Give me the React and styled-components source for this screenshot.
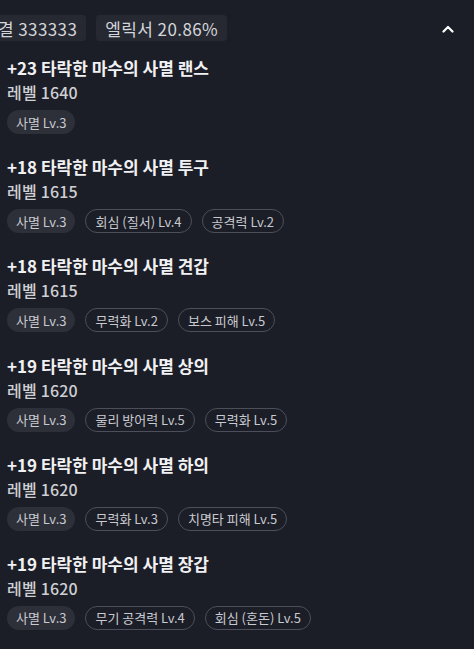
import React from 'react'
import styled, { createGlobalStyle } from 'styled-components'

const items = [
  { title: '+23 타락한 마수의 사멸 랜스', level: 1640, options: [] },
  { title: '+18 타락한 마수의 사멸 투구', level: 1615, options: ['회심 (질서) Lv.4', '공격력 Lv.2'] },
  { title: '+18 타락한 마수의 사멸 견갑', level: 1615, options: ['무력화 Lv.2', '보스 피해 Lv.5'] },
  { title: '+19 타락한 마수의 사멸 상의', level: 1620, options: ['물리 방어력 Lv.5', '무력화 Lv.5'] },
  { title: '+19 타락한 마수의 사멸 하의', level: 1620, options: ['무력화 Lv.3', '치명타 피해 Lv.5'] },
  { title: '+19 타락한 마수의 사멸 장갑', level: 1620, options: ['무기 공격력 Lv.4', '회심 (혼돈) Lv.5'] },
]

function App() {
  return (
    <Page>
      <Global />
      <TopBar>
        <Stats>
          <Stat>결 333333</Stat>
          <Stat>엘릭서 20.86%</Stat>
        </Stats>
        <Toggle>
          <svg width="12" height="8" viewBox="0 0 12 8">
            <path d="M1.5 6.5 L6 2 L10.5 6.5" fill="none" stroke="#fff" strokeWidth="2.2" strokeLinecap="round" strokeLinejoin="round" />
          </svg>
        </Toggle>
      </TopBar>

      <List>
        {items.map((it, i) => (
          <Item key={i}>
            <Title>{it.title}</Title>
            <Level>레벨 {it.level}</Level>
            <Chips>
              <Chip filled>사멸 Lv.3</Chip>
              {it.options.map((o) => (
                <Chip key={o}>{o}</Chip>
              ))}
            </Chips>
          </Item>
        ))}
      </List>
    </Page>
  )
}

export default App

const Global = createGlobalStyle`
  html, body {
    margin:0;
    padding:0;
    background:#1c1e27;
  }
  body{
    font-family:"Noto Sans CJK KR","Noto Sans",sans-serif;
    overflow:hidden;
  }
`

const Page = styled.div`
    width:474px;
    height:649px;
    background:#1c1e27;
    padding:15px 0 0 7px;
    box-sizing:border-box;
    overflow:hidden;
`

const TopBar = styled.div`
    display:flex;
    align-items:center;
    justify-content:space-between;
    padding-right:20px;
`

const Stats = styled.div`
    display:flex;
    gap:10px;
    margin-left:-18px;
`

const Stat = styled.div`
    height:26px;
    display:flex;
    align-items:center;
    padding:0 9px;
    background:#262932;
    border-radius:4px;
    color:#d4d5da;
    font-size:17px;
    letter-spacing:0.4px;
    white-space:nowrap;
`

const Toggle = styled.div`
    display:flex;
    align-items:center;
    margin-top:2px;
`

const List = styled.div`
    display:flex;
    flex-direction:column;
    gap:21.2px;
    margin-top:15px;
`

const Item = styled.div`
    display:flex;
    flex-direction:column;
`

const Title = styled.div`
    font-size:17px;
    font-weight:700;
    color:#f1f1f3;
    line-height:24px;
`

const Level = styled.div`
    font-size:16px;
    font-weight:500;
    color:#cfd0d4;
    line-height:24px;
    letter-spacing:0.2px;
`

const Chips = styled.div`
    display:flex;
    gap:10px;
    margin-top:6px;
`

const Chip = styled.div`
    height:24px;
    box-sizing:border-box;
    display:flex;
    align-items:center;
    padding:0 9px;
    border-radius:12px;
    font-size:13px;
    color:#c9cad0;
    white-space:nowrap;
    background:${p => p.filled ? '#2d3039' : 'transparent'};
    border:${p => p.filled ? 'none' : '1.5px solid #4c4f59'};
`
